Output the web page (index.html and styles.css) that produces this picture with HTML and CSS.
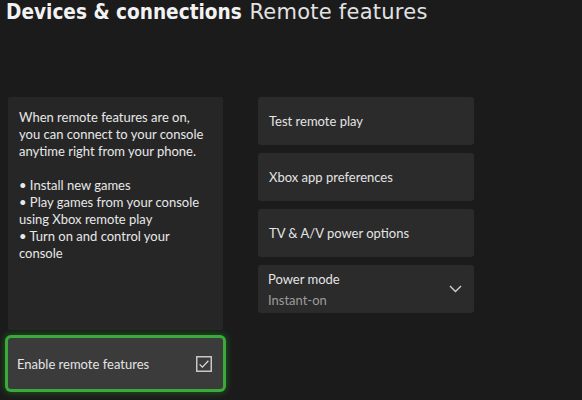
FILE: index.html
```html
<!DOCTYPE html>
<html lang="en">
  <head>
    <meta charset="UTF-8" />
    <meta name="viewport" content="width=device-width, initial-scale=1.0" />
    <title>Remote features</title>
    <link rel="stylesheet" href="styles.css">
  </head>
  <body>
    <h1 class="page-title">
      <span class="title-section">Devices &amp; connections</span>
      <span class="title-page">Remote features</span>
    </h1>
    <div class="settings">
      <div class="left-column">
        <div class="info-panel">
          <p>When remote features are on, you can connect to your console anytime right from your phone.</p>
          <p>
            • Install new games<br />
            • Play games from your console using Xbox remote play<br />
            • Turn on and control your console
          </p>
        </div>
        <button class="toggle-tile focused">
          <span>Enable remote features</span>
          <svg class="checkbox" width="16" height="16" viewBox="0 0 16 16">
            <rect x="0.75" y="0.75" width="14.5" height="14.5" fill="none" stroke="#c8c8c8" stroke-width="1.5" />
            <path d="M3.6 8.4 L6.4 11.1 L12.4 4.8" fill="none" stroke="#d8d8d8" stroke-width="1.3" />
          </svg>
        </button>
      </div>
      <div class="right-column">
        <button class="tile">Test remote play</button>
        <button class="tile">Xbox app preferences</button>
        <button class="tile">TV &amp; A/V power options</button>
        <button class="tile dropdown">
          <span class="dropdown-text">
            <span class="dropdown-label">Power mode</span>
            <span class="dropdown-value">Instant-on</span>
          </span>
          <svg class="chevron" width="13" height="8" viewBox="0 0 13 8">
            <path d="M1 1 L6.5 6.5 L12 1" fill="none" stroke="#d0d0d0" stroke-width="1.4" />
          </svg>
        </button>
      </div>
    </div>
  </body>
</html>
```

FILE: styles.css
```css
body {
  margin: 0;
  padding: 0;
  background-color: #1b1b1b;
  color: #e8e8e8;
  font-family: "Lato", "Liberation Sans", sans-serif;
  height: 400px;
  overflow: hidden;
}
.page-title {
  margin: 0;
  padding: 0 0 0 6px;
  height: 26px;
  line-height: 24px;
  font-family: "DejaVu Sans Condensed", "DejaVu Sans", sans-serif;
  font-size: 21px;
  white-space: nowrap;
}
.title-section {
  font-weight: bold;
  font-size: 20.6px;
  color: #f2f2f2;
}
.title-page {
  font-family: "DejaVu Sans", sans-serif;
  font-weight: normal;
  letter-spacing: 0.25px;
  color: #e2e2e2;
  margin-left: 1px;
}
.settings {
  display: flex;
  gap: 35px;
  padding: 71px 0 0 8px;
}
.left-column {
  width: 215px;
  display: flex;
  flex-direction: column;
  gap: 8px;
}
.info-panel {
  background: #262626;
  border-radius: 2px;
  height: 233px;
  padding: 12px 11px;
  box-sizing: border-box;
  font-size: 13px;
  line-height: 17px;
}
.info-panel p {
  margin: 0 0 17px;
}
button {
  font-family: inherit;
  color: inherit;
  border: none;
  cursor: pointer;
  text-align: left;
}
.toggle-tile {
  display: flex;
  align-items: center;
  justify-content: space-between;
  height: 51px;
  padding: 0 11px 0 9px;
  background: #3b3b3b;
  border-radius: 3px;
  font-size: 13px;
  color: #e4e4e4;
}
.focused {
  box-shadow: 0 0 0 3px #3aab3a, 0 0 6px 4px rgba(40, 150, 40, 0.45);
}
.right-column {
  width: 216px;
  display: flex;
  flex-direction: column;
  gap: 8px;
}
.tile {
  height: 48px;
  background: #2b2b2b;
  border-radius: 3px;
  padding: 0 11px;
  font-size: 13px;
  color: #e4e4e4;
}
.dropdown {
  display: flex;
  align-items: center;
  justify-content: space-between;
  padding: 0 12px 0 10px;
}
.dropdown-text {
  display: flex;
  flex-direction: column;
  gap: 5px;
}
.dropdown-value {
  color: #9c9c9c;
}
```
